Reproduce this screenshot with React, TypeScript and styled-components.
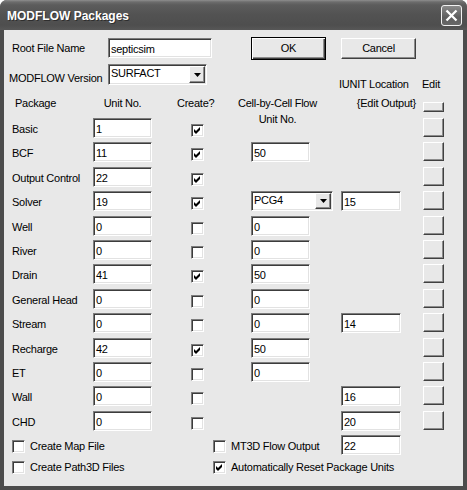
import React from "react";
import styled, { createGlobalStyle, css } from "styled-components";

const GlobalStyle = createGlobalStyle`
  html, body {
    margin: 0;
    padding: 0;
    background: #ffffff;
  }
`;

type Pkg = {
  name: string;
  unit: string;
  create: boolean;
  cbc?: string;
  solver?: string;
  iunit?: string;
};

const packages: Pkg[] = [
  { name: "Basic", unit: "1", create: true },
  { name: "BCF", unit: "11", create: true, cbc: "50" },
  { name: "Output Control", unit: "22", create: true },
  { name: "Solver", unit: "19", create: true, solver: "PCG4", iunit: "15" },
  { name: "Well", unit: "0", create: false, cbc: "0" },
  { name: "River", unit: "0", create: false, cbc: "0" },
  { name: "Drain", unit: "41", create: true, cbc: "50" },
  { name: "General Head", unit: "0", create: false, cbc: "0" },
  { name: "Stream", unit: "0", create: false, cbc: "0", iunit: "14" },
  { name: "Recharge", unit: "42", create: true, cbc: "50" },
  { name: "ET", unit: "0", create: false, cbc: "0" },
  { name: "Wall", unit: "0", create: false, iunit: "16" },
  { name: "CHD", unit: "0", create: false, iunit: "20" },
];

const raised = css`
  box-sizing: border-box;
  background: #e8e8e8;
  border: 1px solid;
  border-color: #ffffff #404040 #404040 #ffffff;
  box-shadow: inset -1px -1px 0 #8c8c8c;
`;

const sunken = css`
  box-sizing: border-box;
  background: #ffffff;
  border: 1px solid;
  border-color: #7c7c7c #ffffff #ffffff #7c7c7c;
  box-shadow: inset 1px 1px 0 #3c3c3c, inset -1px -1px 0 #e2e2e2;
`;

const Window = styled.div`
  width: 467px;
  height: 490px;
  display: flex;
  flex-direction: column;
  background: #4c4c4c;
  border-radius: 7px 7px 0 0;
  overflow: hidden;
  font-family: "Liberation Sans", Arial, sans-serif;
  font-size: 11px;
  line-height: 13px;
  letter-spacing: -0.25px;
  color: #000000;
`;

const TitleBar = styled.div`
  flex: none;
  height: 30px;
  display: flex;
  align-items: center;
  justify-content: space-between;
  padding: 0 5px 0 7px;
  background: linear-gradient(
    180deg,
    #8e8e8e 0px,
    #6c6c6c 2px,
    #5c5c5c 5px,
    #535353 14px,
    #4e4e4e 25px,
    #575757 30px
  );
`;

const TitleText = styled.div`
  padding-top: 2px;
  font-size: 12px;
  line-height: 14px;
  font-weight: bold;
  letter-spacing: 0;
  color: #ffffff;
  text-shadow: 1px 1px 0 #2e2e2e;
`;

const CloseButton = styled.div`
  box-sizing: border-box;
  width: 21px;
  height: 21px;
  display: flex;
  align-items: center;
  justify-content: center;
  border: 1px solid #f2f2f2;
  border-radius: 3px;
  background: linear-gradient(180deg, #8a8a8a, #5e5e5e 60%, #686868);
`;

const Body = styled.div`
  flex: 1;
  margin: 0 4px 4px;
  padding-left: 8px;
  background: #e8e8e8;
`;

const Row = styled.div<{ $mt?: number; $h: number; $align?: string }>`
  display: flex;
  align-items: ${(p) => p.$align ?? "flex-start"};
  height: ${(p) => p.$h}px;
  margin-top: ${(p) => p.$mt ?? 0}px;
`;

const Label = styled.div<{ $w?: number; $pt?: number; $ml?: number; $align?: string }>`
  flex: none;
  width: ${(p) => (p.$w ? `${p.$w}px` : "auto")};
  padding-top: ${(p) => p.$pt ?? 0}px;
  margin-left: ${(p) => p.$ml ?? 0}px;
  text-align: ${(p) => p.$align ?? "left"};
  white-space: nowrap;
`;

const Field = styled.div<{ $w: number; $h?: number; $mt?: number }>`
  ${sunken};
  flex: none;
  width: ${(p) => p.$w}px;
  height: ${(p) => p.$h ?? 20}px;
  margin-top: ${(p) => p.$mt ?? 0}px;
  padding: 4px 0 0 2px;
  white-space: nowrap;
  overflow: hidden;
`;

const SelectBox = styled.div<{ $w: number; $h: number }>`
  ${sunken};
  flex: none;
  width: ${(p) => p.$w}px;
  height: ${(p) => p.$h}px;
  padding: 1px;
  display: flex;
  justify-content: space-between;
`;

const SelectText = styled.span`
  padding: 1px 0 0 1px;
  white-space: nowrap;
`;

const DropButton = styled.span`
  ${raised};
  width: 16px;
  height: 100%;
  display: flex;
  align-items: center;
  justify-content: center;
`;

const PushButton = styled.div<{ $default?: boolean; $mt?: number; $ml?: number }>`
  ${raised};
  flex: none;
  width: 75px;
  height: ${(p) => (p.$default ? 23 : 21)}px;
  margin-top: ${(p) => p.$mt ?? 0}px;
  margin-left: ${(p) => p.$ml ?? 0}px;
  display: flex;
  align-items: center;
  justify-content: center;
  ${(p) =>
    p.$default &&
    css`
      outline: none;
      border: 1px solid #000000;
      box-shadow: inset 1px 1px 0 #ffffff, inset -1px -1px 0 #404040,
        inset -2px -2px 0 #8c8c8c;
    `}
`;

const EditButton = styled.div<{ $h?: number; $mt?: number; $ml?: number }>`
  ${raised};
  flex: none;
  width: 21px;
  height: ${(p) => p.$h ?? 19}px;
  margin-top: ${(p) => p.$mt ?? 0}px;
  margin-left: ${(p) => p.$ml ?? 0}px;
`;

const Box = styled.span<{ $mt?: number }>`
  ${sunken};
  flex: none;
  width: 13px;
  height: 13px;
  margin-top: ${(p) => p.$mt ?? 0}px;
  display: flex;
  align-items: center;
  justify-content: center;
`;

const PackageRow = styled.div`
  display: grid;
  grid-template-columns: 81px 98px 60px 90px 82px 21px;
  align-items: start;
  height: 24.4px;
`;

const Table = styled.div`
  margin-top: 5px;
`;

const Option = styled.div<{ $w: number; $pt?: number }>`
  flex: none;
  width: ${(p) => p.$w}px;
  padding-top: ${(p) => p.$pt ?? 0}px;
  display: flex;
  align-items: center;
  gap: 5px;
  white-space: nowrap;
`;

const SecondLine = styled.span`
  display: block;
  margin-top: 3px;
`;

const CheckBox = ({ checked, mt }: { checked: boolean; mt?: number }) => (
  <Box $mt={mt}>
    {checked && (
      <svg width="7" height="7" viewBox="0 0 7 7">
        <polygon points="0,2 2,4 6,0 6,3 2,7 0,5" fill="#000" />
      </svg>
    )}
  </Box>
);

const Select = ({ value, w, h }: { value: string; w: number; h: number }) => (
  <SelectBox $w={w} $h={h}>
    <SelectText>{value}</SelectText>
    <DropButton>
      <svg width="7" height="4" viewBox="0 0 7 4">
        <polygon points="0,0 7,0 3.5,4" fill="#000" />
      </svg>
    </DropButton>
  </SelectBox>
);

export default function App() {
  return (
    <>
      <GlobalStyle />
      <Window>
        <TitleBar>
          <TitleText>MODFLOW Packages</TitleText>
          <CloseButton>
            <svg width="19" height="19" viewBox="0 0 19 19">
              <path
                d="M4.5 4.5 L14.5 14.5 M14.5 4.5 L4.5 14.5"
                stroke="#fff"
                strokeWidth="2.3"
              />
            </svg>
          </CloseButton>
        </TitleBar>

        <Body>
          <Row $mt={7} $h={23}>
            <Label $w={96} $pt={5}>Root File Name</Label>
            <Field $w={104} $mt={1}>septicsim</Field>
            <PushButton $default $ml={39}>OK</PushButton>
            <PushButton $ml={15} $mt={1}>Cancel</PushButton>
          </Row>

          <Row $mt={4} $h={27}>
            <Label $w={99} $ml={-3} $pt={8}>MODFLOW Version</Label>
            <Select value="SURFACT" w={99} h={21} />
            <Label $w={83} $ml={132} $pt={14}>IUNIT Location</Label>
            <Label $pt={14}>Edit</Label>
          </Row>

          <Row $mt={6} $h={16}>
            <Label $w={81} $ml={3}>Package</Label>
            <Label $w={59} $ml={-3} $align="center">Unit No.</Label>
            <Label $w={63} $ml={25}>Create?</Label>
            <Label $w={79} $ml={-2} $align="center">
              Cell-by-Cell Flow
              <SecondLine>Unit No.</SecondLine>
            </Label>
            <Label $w={99} $align="right">{"{Edit Output}"}</Label>
            <EditButton $h={10} $mt={5} $ml={7} />
          </Row>

          <Table>
            {packages.map((p) => (
              <PackageRow key={p.name}>
                <Label $pt={5}>{p.name}</Label>
                <Field $w={59}>{p.unit}</Field>
                <CheckBox checked={p.create} mt={6} />
                <div>
                  {p.solver ? (
                    <Select value={p.solver} w={82} h={20} />
                  ) : p.cbc ? (
                    <Field $w={59}>{p.cbc}</Field>
                  ) : null}
                </div>
                <div>{p.iunit && <Field $w={60}>{p.iunit}</Field>}</div>
                <EditButton />
              </PackageRow>
            ))}
          </Table>

          <Row $h={20} $align="center">
            <Option $w={201} $pt={3}>
              <CheckBox checked={false} />
              <span>Create Map File</span>
            </Option>
            <Option $w={128} $pt={3}>
              <CheckBox checked={false} />
              <span>MT3D Flow Output</span>
            </Option>
            <Field $w={60}>22</Field>
          </Row>

          <Row $mt={5} $h={14} $align="center">
            <Option $w={201}>
              <CheckBox checked={false} />
              <span>Create Path3D Files</span>
            </Option>
            <Option $w={250}>
              <CheckBox checked />
              <span>Automatically Reset Package Units</span>
            </Option>
          </Row>
        </Body>
      </Window>
    </>
  );
}
